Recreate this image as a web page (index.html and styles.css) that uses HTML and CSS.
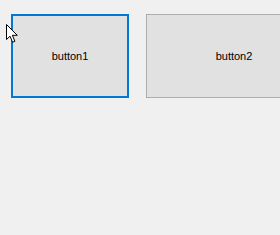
FILE: index.html
```html
<!DOCTYPE html>
<html lang="en">
<head>
  <meta charset="UTF-8">
  <title>Form1</title>
  <link rel="stylesheet" href="styles.css">
</head>
<body>
  <div class="form">
    <div class="button-row">
      <button class="btn focused">button1</button>
      <button class="btn btn-wide">button2</button>
    </div>
    <!-- マウスカーソル -->
    <svg class="cursor" width="13" height="20" viewBox="0 0 13 20">
      <path d="M0.5 0.5 L0.5 15.5 L4 12.2 L6.6 18.3 L8.9 17.3 L6.4 11.3 L11.3 11.3 Z"
            fill="#fff" stroke="#000" stroke-width="1" stroke-linejoin="miter"/>
    </svg>
  </div>
</body>
</html>
```

FILE: styles.css
```css
* {
  margin: 0;
  padding: 0;
  box-sizing: border-box;
}

body {
  width: 280px;
  height: 235px;
  overflow: hidden;
  background-color: #f0f0f0;
  font-family: "Liberation Sans", Arial, sans-serif;
}

.form {
  position: relative;
  width: 280px;
  height: 235px;
  overflow: hidden; /* 右側のボタンはウィンドウ端で切れる */
}

.button-row {
  display: flex;
  gap: 17px;
  padding: 14px 0 0 11px;
}

.btn {
  flex: none;
  width: 118px;
  height: 84px;
  display: flex;
  justify-content: center;
  align-items: center;
  background-color: #e1e1e1;
  border: 1px solid #adadad;
  color: #000;
  font-family: "Liberation Sans", Arial, sans-serif;
  font-size: 11px;
}

.btn.focused {
  border: 2px solid #0078d7;
}

.btn-wide {
  width: 176px;
}

.cursor {
  position: absolute;
  left: 6px;
  top: 24px;
}
```
